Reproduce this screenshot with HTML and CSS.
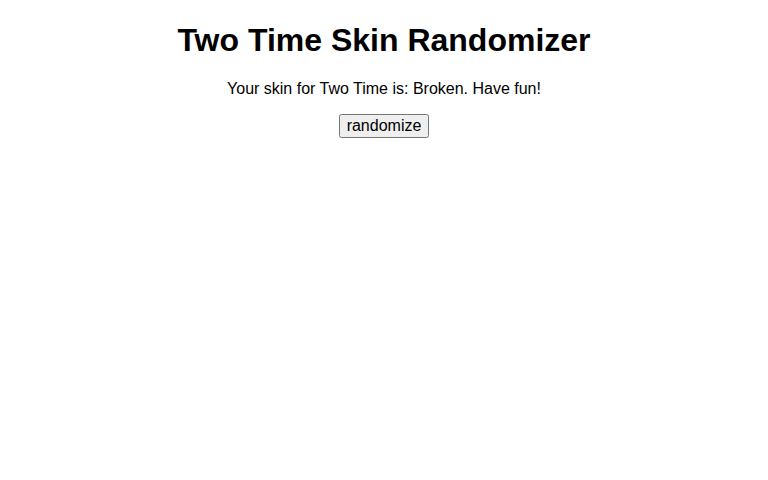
FILE: index.html
```html
<!DOCTYPE html>
<html>
<head>
    <title>Two Time Skin Randomizer</title>
    <link rel="stylesheet" href="styles.css">
</head>
<body>
    <h1>Two Time Skin Randomizer</h1>
    <p id="result">Your skin for Two Time is: Broken. Have fun!</p>
    <button onclick="randomize()">randomize</button>

    <script>
        const skins = ['Broken', 'Default', 'Spawn', 'Ritual', 'Cultist', 'Timeless'];

        function randomize() {
            const skin = skins[Math.floor(Math.random() * skins.length)];
            document.getElementById('result').textContent = `Your skin for Two Time is: ${skin}. Have fun!`;
        }
    </script>
</body>
</html>
```

FILE: styles.css
```css
body {
    font-family: "Liberation Sans", Arial, sans-serif;
    text-align: center;
}
h1 {
    margin-top: 13.5px;
}
button {
    font-family: "Liberation Sans", Arial, sans-serif;
    font-size: 16px;
}
```
